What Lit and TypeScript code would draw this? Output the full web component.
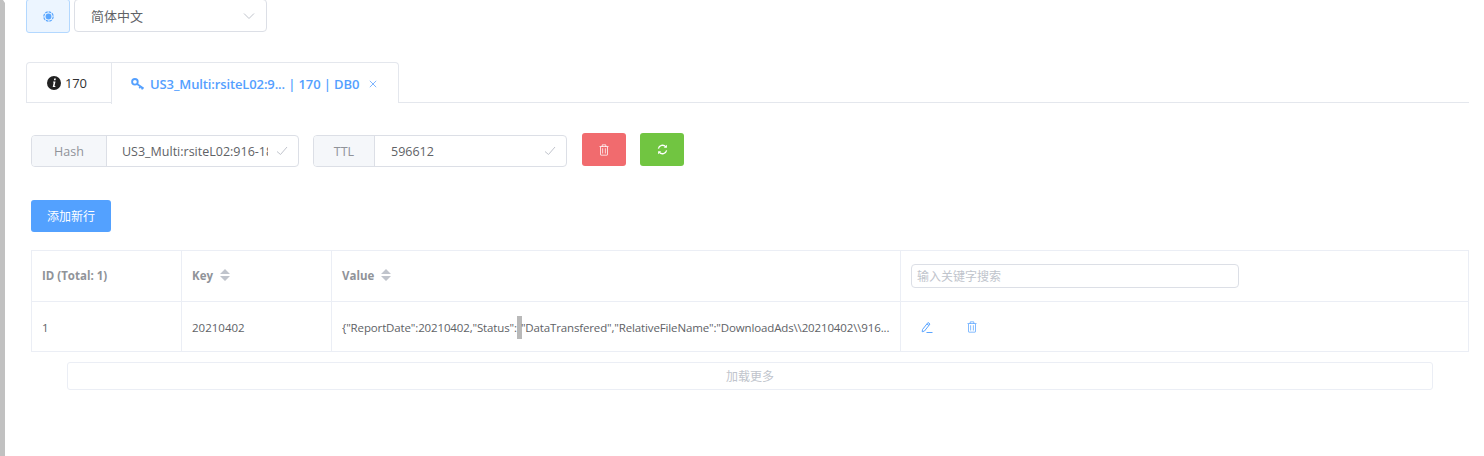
import { LitElement, html, css, svg } from "lit";
import { customElement } from "lit/decorators.js";

const trash = svg`<path fill="currentColor" d="M2 3h3V1.600C5 1 5.400.6 6 .6h4c.6 0 1 .4 1 1V3h3v1h-1v10c0 .7-.5 1.200-1.200 1.200H4.200C3.500 15.200 3 14.700 3 14V4H2V3zm4 0h4V1.600H6V3zM4 4v10c0 .1.100.2.200.2h7.600c.1 0 .2-.1.2-.2V4H4zm1.800 1.800h1v6.700h-1V5.800zm3.400 0h1v6.700h-1V5.800z"/>`;

@customElement("app-root")
export class AppRoot extends LitElement {
  static styles = css`
    :host {
      display: flex;
      height: 456px;
      overflow: hidden;
      background: #fff;
      color: #606266;
      font-family: "Open Sans", "Noto Sans CJK SC", sans-serif;
      font-size: 12px;
    }
    * { box-sizing: border-box; }
    .scroll {
      width: 5px; flex: none; background: #c1c1c1;
      clip-path: polygon(0 0, 3px 0, 5px 3px, 5px 100%, 0 100%);
    }
    .main { flex: none; width: 1464px; padding-left: 21px; }
    .top { display: flex; gap: 4px; height: 32px; margin-top: -1px; }
    .eye {
      width: 44px; height: 34px; display: flex; align-items: center; justify-content: center;
      background: #ecf5ff; border: 1px solid #b3d8ff; border-radius: 3px; color: #59a6ff;
    }
    .select {
      width: 193px; height: 33px; border: 1px solid #dcdfe6; border-radius: 4px;
      display: flex; align-items: center; justify-content: space-between;
      padding: 0 11px 0 16px; font-size: 13px;
    }
    .select svg { color: #c0c4cc; }
    .tabs { display: flex; height: 41px; margin-top: 31px; width: 1443px; }
    .tabbox {
      display: flex; height: 41px; border: 1px solid #e4e7ed; border-bottom: none; border-radius: 4px 4px 0 0; flex: none;
    }
    .tab { height: 40px; display: flex; align-items: center; }
    .tab.one {
      width: 84px; border-bottom: 1px solid #e4e7ed; padding-left: 20px; gap: 4px;
      font-size: 13px; letter-spacing: -0.2px; color: #303133; font-weight: 500;
    }
    .tab.two {
      width: 287px; height: 41px; border-left: 1px solid #e4e7ed; padding-left: 19px; gap: 5px;
      color: #54a0ff; font-weight: 600; font-size: 13px; letter-spacing: -0.12px;
    }
    .close { margin-left: 5px; color: #7fb6ff; display: flex; }
    .rest { flex: 1; border-bottom: 1px solid #e4e7ed; height: 41px; }
    .form { display: flex; align-items: flex-start; margin: 30px 0 0 5px; height: 33px; }
    .group {
      display: flex; height: 32px; margin-top: 2px; border: 1px solid #dcdfe6; border-radius: 4px; overflow: hidden; flex: none;
      font-size: 12.5px;
    }
    .prep {
      background: #f5f7fa; color: #909399; border-right: 1px solid #dcdfe6;
      display: flex; align-items: center; justify-content: center; flex: none;
    }
    .val { flex: 1; display: flex; align-items: center; justify-content: space-between; min-width: 0; }
    .val span { overflow: hidden; white-space: nowrap; }
    .val svg { color: #c0c4cc; flex: none; }
    .hash { width: 268px; margin-right: 14px; }
    .hash .prep { width: 75px; }
    .hash .val { padding: 0 10px 0 15px; }
    .hash .val span { width: 146px; }
    .ttl { width: 254px; margin-right: 15px; }
    .ttl .prep { width: 61px; }
    .ttl .val { padding: 0 10px 0 16px; }
    .btn {
      width: 44px; height: 33px; border-radius: 3px; display: flex; align-items: center; justify-content: center; color: #fff; flex: none;
    }
    .del { background: #f16b6e; margin-right: 14px; }
    .ref { background: #71c541; }
    .add {
      margin: 34px 0 0 5px; width: 80px; height: 32px; border-radius: 3px; background: #53a1ff; color: #fff;
      display: flex; align-items: center; justify-content: center;
    }
    .table {
      margin: 18px 0 0 5px; width: 1438px; height: 102px; border: 1px solid #ebeef5;
      display: grid; grid-template-columns: 150px 150px 569px 1fr; grid-template-rows: 51px 50px;
    }
    .c {
      display: flex; align-items: center; padding-left: 10px; border-right: 1px solid #ebeef5; font-size: 11.5px; white-space: nowrap; min-width: 0; overflow: hidden;
    }
    .c.h { border-bottom: 1px solid #ebeef5; color: #909399; font-weight: 700; padding-bottom: 2px; }
    .c.h.last { padding-bottom: 0; }
    .c.last { border-right: none; }
    .c.h svg { margin-left: 7px; }
    .v { letter-spacing: -0.012em; }
    .sel { display: inline-block; width: 5px; margin-right: -1px; background: #b9b9b9; line-height: 23px; }
    .search {
      width: 328px; height: 24px; border: 1px solid #dcdfe6; border-radius: 4px; color: #c0c4cc;
      padding-left: 5px; display: flex; align-items: center; font-weight: 400; font-size: 12px;
    }
    .ops { color: #5ba5ff; padding-left: 20px; }
    .ops svg:first-child { margin-right: 33px; }
    .more {
      margin: 10px 0 0 41px; width: 1366px; height: 28px; border: 1px solid #ebeef5; border-radius: 3px;
      color: #c0c4cc; display: flex; align-items: center; justify-content: center;
    }
  `;

  render() {
    return html`
      <div class="scroll"></div>
      <div class="main">
        <div class="top">
          <div class="eye">
            <svg width="13" height="13" viewBox="0 0 12 12">
              <circle cx="6" cy="6" r="2.700" fill="currentColor"/>
              <circle cx="6" cy="6" r="4.300" fill="none" stroke="currentColor" stroke-width="1.100" stroke-dasharray="2.500 .8"/>
            </svg>
          </div>
          <div class="select">
            <span>简体中文</span>
            <svg width="12" height="8" viewBox="0 0 12 8"><path d="M1 1.500l5 5 5-5" fill="none" stroke="currentColor"/></svg>
          </div>
        </div>
        <div class="tabs">
          <div class="tabbox">
            <div class="tab one">
              <svg width="14" height="14" viewBox="0 0 14 14">
                <circle cx="7" cy="7" r="7" fill="#222"/>
                <path fill="#fff" d="M7.200 2.500h1.700L8.500 4.200H6.900zM6.300 5.600h2.200L7.500 9.900h1l-.3 1H5.700l1-4.300h-.7z"/>
              </svg>
              <span>170</span>
            </div>
            <div class="tab two">
              <svg width="14" height="14" viewBox="0 0 15 14">
                <circle cx="4.200" cy="4.700" r="3" fill="none" stroke="currentColor" stroke-width="2"/>
                <path d="M6.500 7l7 4.800M10.200 9.500l-1.300 2M12.400 11l-1 1.800" fill="none" stroke="currentColor" stroke-width="1.800"/>
              </svg>
              <span>US3_Multi:rsiteL02:9... | 170 | DB0</span>
              <span class="close"><svg width="8" height="8" viewBox="0 0 8 8"><path d="M.8.800l6.400 6.400M7.200.800L.8 7.200" stroke="currentColor" fill="none"/></svg></span>
            </div>
          </div>
          <div class="rest"></div>
        </div>
        <div class="form">
          <div class="group hash">
            <div class="prep">Hash</div>
            <div class="val">
              <span>US3_Multi:rsiteL02:916-18</span>
              <svg width="12" height="10" viewBox="0 0 12 10"><path d="M1 5.500l3.500 3L11 1" fill="none" stroke="currentColor"/></svg>
            </div>
          </div>
          <div class="group ttl">
            <div class="prep">TTL</div>
            <div class="val">
              <span>596612</span>
              <svg width="12" height="10" viewBox="0 0 12 10"><path d="M1 5.500l3.500 3L11 1" fill="none" stroke="currentColor"/></svg>
            </div>
          </div>
          <div class="btn del"><svg width="12" height="12" viewBox="0 0 16 16">${trash}</svg></div>
          <div class="btn ref">
            <svg width="11" height="11" viewBox="0 0 12 12">
              <path d="M1.500 5A4.600 4.600 0 0 1 9.500 3M10.500 7A4.600 4.600 0 0 1 2.500 9" fill="none" stroke="currentColor" stroke-width="1.400"/>
              <path d="M10.800.800v3.400H7.400zM1.200 11.200V7.800h3.400z" fill="currentColor"/>
            </svg>
          </div>
        </div>
        <div class="add">添加新行</div>
        <div class="table">
          <div class="c h">ID (Total: 1)</div>
          <div class="c h">Key ${this.sort()}</div>
          <div class="c h">Value ${this.sort()}</div>
          <div class="c h last"><div class="search">输入关键字搜索</div></div>
          <div class="c">1</div>
          <div class="c">20210402</div>
          <div class="c v">{"ReportDate":20210402,"Status":<span class="sel">&nbsp;</span>"DataTransfered","RelativeFileName":"DownloadAds\\\\20210402\\\\916...</div>
          <div class="c last ops">
            <svg width="12" height="12" viewBox="0 0 12 12">
              <path d="M1.500 8.500L7 1.500l2 1.500-5.500 7-2.300.8zM6 3l2 1.500" fill="none" stroke="currentColor"/>
              <path d="M5.500 11.500h6" stroke="currentColor"/>
            </svg>
            <svg width="12" height="12" viewBox="0 0 16 16">${trash}</svg>
          </div>
        </div>
        <div class="more">加载更多</div>
      </div>
    `;
  }

  sort() {
    return html`<svg width="10" height="12" viewBox="0 0 10 12"><path d="M5 0l5 5H0zM0 7h10l-5 5z" fill="#c0c4cc"/></svg>`;
  }
}
